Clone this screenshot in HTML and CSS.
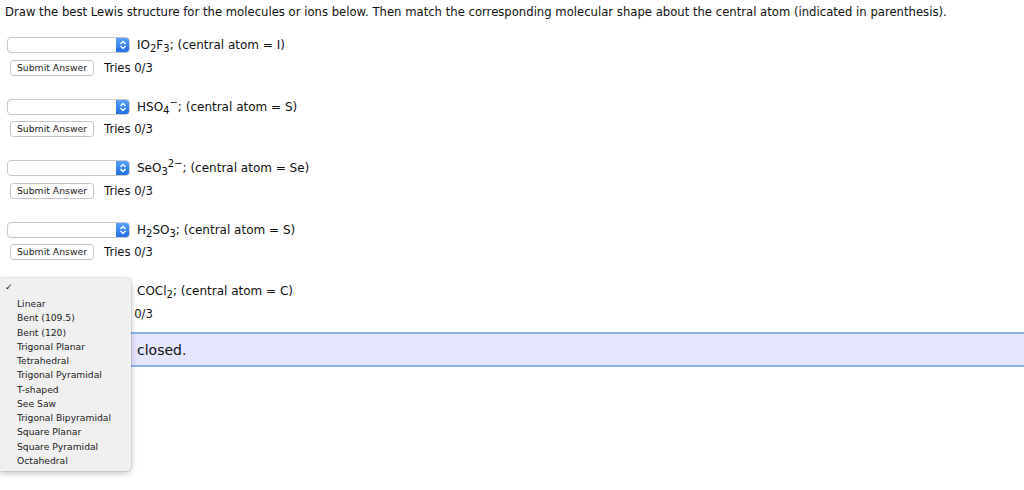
FILE: index.html
```html
<!DOCTYPE html>
<html>
<head>
<meta charset="utf-8">
<link rel="stylesheet" href="styles.css">
</head>
<body>
<div class="page">
  <p class="intro">Draw the best Lewis structure for the molecules or ions below. Then match the corresponding molecular shape about the central atom (indicated in parenthesis).</p>

  <div class="question">
    <div class="q-row">
      <div class="select"><span class="stepper"><svg width="8" height="10" viewBox="0 0 8 10"><path d="M1.5 4 L4 1.5 L6.5 4 M1.5 6 L4 8.5 L6.5 6" fill="none" stroke="#fff" stroke-width="1.3"/></svg></span></div>
      <span class="formula">IO<sub>2</sub>F<sub>3</sub>; (central atom = I)</span>
    </div>
    <div class="sub-row"><button class="submit">Submit Answer</button><span class="tries">Tries 0/3</span></div>
  </div>

  <div class="question">
    <div class="q-row">
      <div class="select"><span class="stepper"><svg width="8" height="10" viewBox="0 0 8 10"><path d="M1.5 4 L4 1.5 L6.5 4 M1.5 6 L4 8.5 L6.5 6" fill="none" stroke="#fff" stroke-width="1.3"/></svg></span></div>
      <span class="formula">HSO<sub>4</sub><sup>−</sup>; (central atom = S)</span>
    </div>
    <div class="sub-row"><button class="submit">Submit Answer</button><span class="tries">Tries 0/3</span></div>
  </div>

  <div class="question">
    <div class="q-row">
      <div class="select"><span class="stepper"><svg width="8" height="10" viewBox="0 0 8 10"><path d="M1.5 4 L4 1.5 L6.5 4 M1.5 6 L4 8.5 L6.5 6" fill="none" stroke="#fff" stroke-width="1.3"/></svg></span></div>
      <span class="formula">SeO<sub>3</sub><sup>2−</sup>; (central atom = Se)</span>
    </div>
    <div class="sub-row"><button class="submit">Submit Answer</button><span class="tries">Tries 0/3</span></div>
  </div>

  <div class="question">
    <div class="q-row">
      <div class="select"><span class="stepper"><svg width="8" height="10" viewBox="0 0 8 10"><path d="M1.5 4 L4 1.5 L6.5 4 M1.5 6 L4 8.5 L6.5 6" fill="none" stroke="#fff" stroke-width="1.3"/></svg></span></div>
      <span class="formula">H<sub>2</sub>SO<sub>3</sub>; (central atom = S)</span>
    </div>
    <div class="sub-row"><button class="submit">Submit Answer</button><span class="tries">Tries 0/3</span></div>
  </div>

  <div class="question last">
    <div class="q-row">
      <div class="select"><span class="stepper"><svg width="8" height="10" viewBox="0 0 8 10"><path d="M1.5 4 L4 1.5 L6.5 4 M1.5 6 L4 8.5 L6.5 6" fill="none" stroke="#fff" stroke-width="1.3"/></svg></span></div>
      <span class="formula">COCl<sub>2</sub>; (central atom = C)</span>
    </div>
    <div class="sub-row"><button class="submit">Submit Answer</button><span class="tries">Tries 0/3</span></div>
  </div>
</div>

<div class="notice"><span class="notice-text">closed.</span></div>

<ul class="menu">
  <li class="checked">&#10003;</li>
  <li>Linear</li>
  <li>Bent (109.5)</li>
  <li>Bent (120)</li>
  <li>Trigonal Planar</li>
  <li>Tetrahedral</li>
  <li>Trigonal Pyramidal</li>
  <li>T-shaped</li>
  <li>See Saw</li>
  <li>Trigonal Bipyramidal</li>
  <li>Square Planar</li>
  <li>Square Pyramidal</li>
  <li>Octahedral</li>
</ul>
</body>
</html>
```

FILE: styles.css
```css
* { box-sizing: border-box; }
html, body { margin: 0; padding: 0; background: #fff; }
body {
  font-family: "DejaVu Sans", Verdana, sans-serif;
  color: #111;
  position: relative;
  min-height: 490px;
}
.page { padding: 5px 0 0 5px; }
.intro {
  margin: 0 0 18px 0;
  font-size: 11.65px;
  line-height: 14px;
}
.question { margin-bottom: 22.5px; }
.question.last { margin-bottom: 10px; }
.q-row {
  display: flex;
  align-items: center;
  height: 16px;
  gap: 7px;
}
.select {
  margin-left: 2px;
  width: 123px;
  height: 16px;
  border: 1px solid #c8c8c8;
  border-radius: 4px;
  background: #fff;
  display: flex;
  justify-content: flex-end;
  overflow: hidden;
}
.stepper {
  width: 13px;
  height: 100%;
  background: linear-gradient(#5aa0fb, #1f6fe6);
  display: flex;
  align-items: center;
  justify-content: center;
}
.formula {
  font-size: 12px;
  line-height: 16px;
}
sub, sup { font-size: 10px; line-height: 0; }
sub { vertical-align: -3px; }
sup { vertical-align: 5px; }
.sub-row {
  display: flex;
  align-items: center;
  margin-top: 6px;
  height: 17px;
  gap: 10px;
}
.submit {
  margin: 0 0 0 5px;
  width: 84px;
  height: 16px;
  padding: 0;
  background: #fff;
  border: 1px solid #c6c6c6;
  border-radius: 3px;
  font-family: "DejaVu Sans", sans-serif;
  font-size: 9.3px;
  color: #222;
  line-height: 14px;
}
.tries { font-size: 11.6px; }
.notice {
  height: 35px;
  background: #e6e5ff;
  border-top: 2px solid #8db5ea;
  border-bottom: 2px solid #8db5ea;
  display: flex;
  align-items: center;
  padding-left: 137px;
}
.notice-text { font-size: 14px; }
.menu {
  position: absolute;
  left: 0;
  top: 278px;
  width: 131px;
  height: 193px;
  margin: 0;
  padding: 2px 0 0 0;
  list-style: none;
  background: #f0f0f0;
  border-radius: 0 5px 5px 0;
  box-shadow: 0 2px 6px rgba(0,0,0,0.25), 0 0 0 1px rgba(0,0,0,0.06);
  font-size: 9.2px;
  line-height: 14.27px;
  color: #222;
}
.menu li { padding-left: 17px; white-space: nowrap; }
.menu li.checked { padding-left: 5px; height: 17px; line-height: 14px; font-size: 9px; }
```
